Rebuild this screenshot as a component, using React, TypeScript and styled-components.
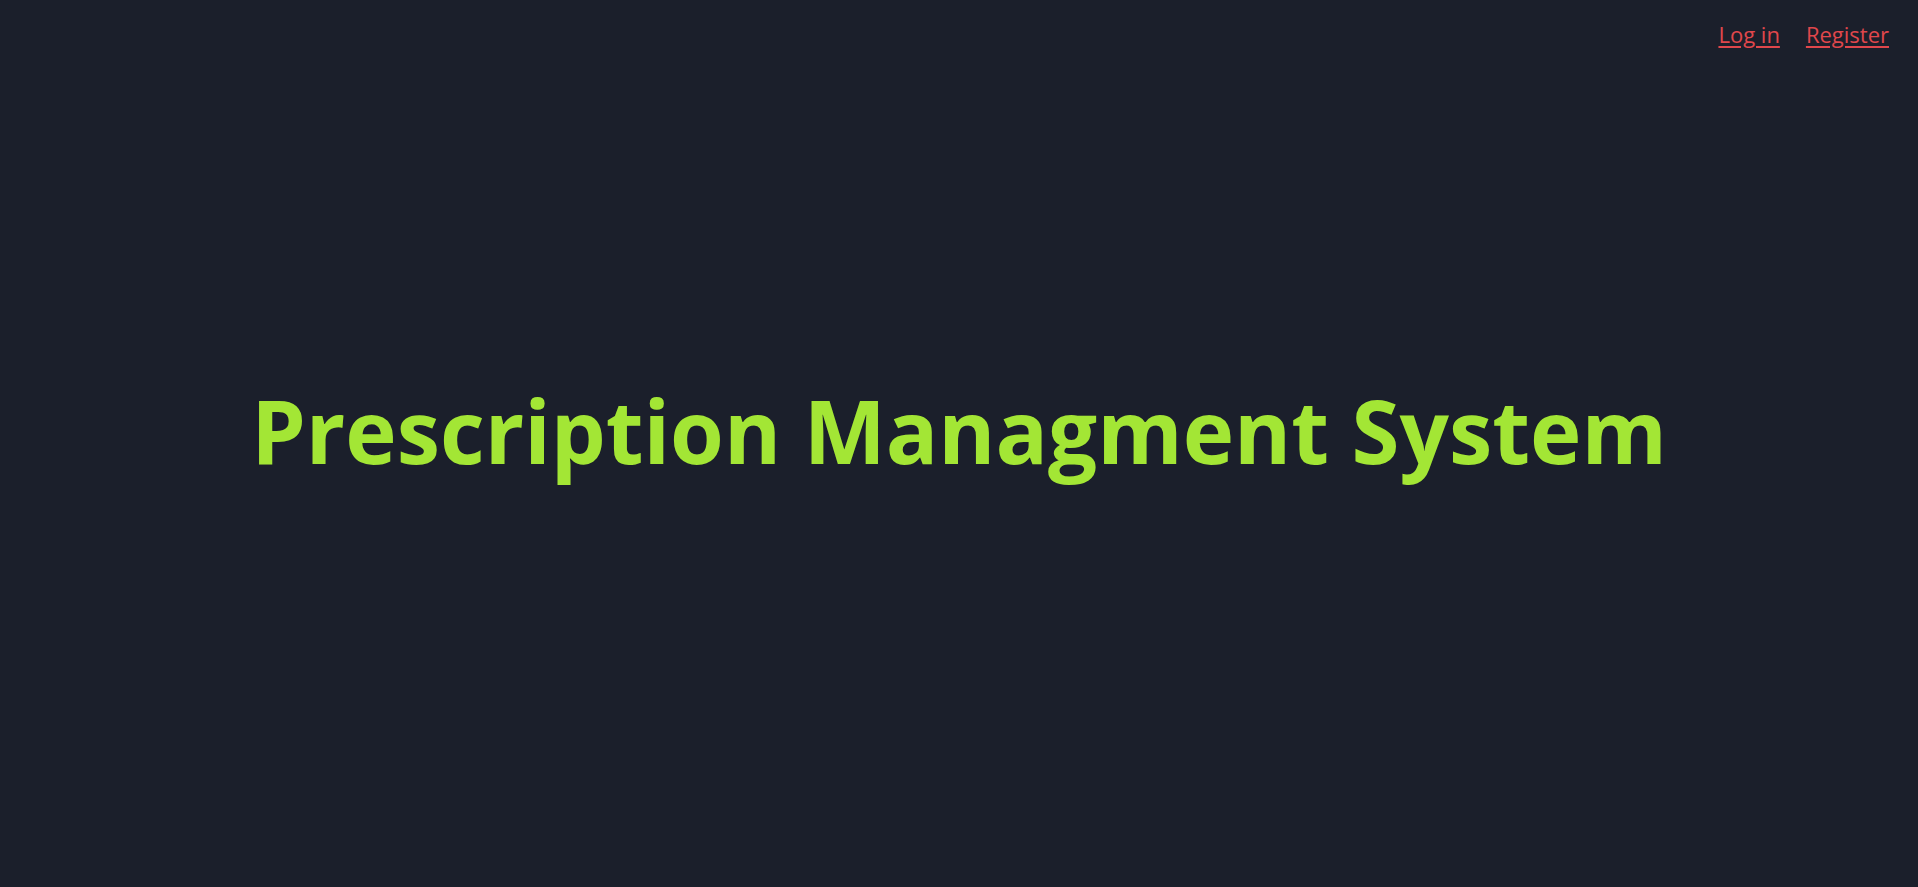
import { ReactElement } from 'react'
import styled, { createGlobalStyle } from 'styled-components'

const GlobalStyle = createGlobalStyle`
  html, body {
    margin: 0;
    padding: 0;
    height: 100%;
    background: #1b1f2b;
  }
  #root {
    height: 100%;
  }
`

const SPage = styled.div`
  position: relative;
  min-height: 100vh;
  display: flex;
  justify-content: center;
  align-items: center;
  background: #1b1f2b;
  font-family: 'Open Sans', 'Noto Sans', sans-serif;
  font-variant-ligatures: none;
`

const SNav = styled.nav`
  position: absolute;
  top: 0;
  right: 0;
  display: flex;
  gap: 26px;
  padding: 19px 29px 0 0;
`

const SLink = styled.a`
  color: #e0474c;
  font-size: 22px;
  text-decoration: underline;
  text-underline-offset: 3px;
  cursor: pointer;
`

const STitle = styled.h1`
  margin: 0 0 28px;
  color: #a3e635;
  font-size: 87px;
  font-weight: 700;
  letter-spacing: 0;
`

function App(): ReactElement {
  return (
    <SPage>
      <GlobalStyle />
      <SNav>
        <SLink href="#">Log in</SLink>
        <SLink href="#">Register</SLink>
      </SNav>
      <STitle>Prescription Managment System</STitle>
    </SPage>
  )
}

export default App
